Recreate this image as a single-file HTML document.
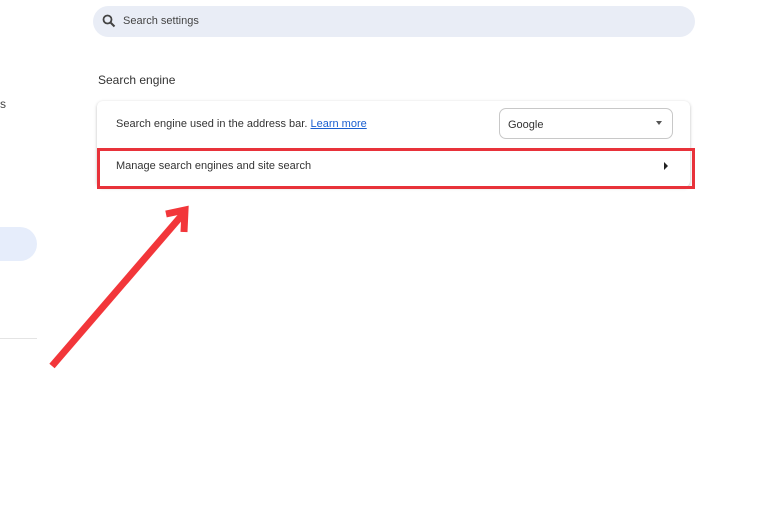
<!DOCTYPE html>
<html><head><style>
body{margin:0;width:768px;height:512px;background:#fff;font-family:"Liberation Sans",sans-serif;position:relative;overflow:hidden;color:#1f1f1f}
.a{position:absolute}
</style></head><body>
<div class="a" style="left:93px;top:6px;width:602px;height:31px;background:#e9edf6;border-radius:16px"></div>
<svg class="a" style="left:102px;top:14px" width="14" height="14" viewBox="0 0 14 14"><circle cx="5.5" cy="5.5" r="4" fill="none" stroke="#444" stroke-width="1.8"/><path d="M8.5 8.5L12.5 12.5" stroke="#444" stroke-width="2"/></svg>
<div class="a" style="left:123px;top:15px;font-size:11px;color:#444">Search settings</div>
<div class="a" style="left:0;top:97px;font-size:12px;color:#444">s</div>
<div class="a" style="left:-20px;top:227px;width:57px;height:34px;background:#e6edfb;border-radius:17px"></div>
<div class="a" style="left:0;top:338px;width:37px;height:1px;background:#e4e4e4"></div>
<div class="a" style="left:98px;top:73px;font-size:12px;color:#333">Search engine</div>
<div class="a" style="left:97px;top:101px;width:593px;height:86px;background:#fff;border-radius:6px;box-shadow:0 1px 3px rgba(0,0,0,.25)"></div>
<div class="a" style="left:116px;top:118px;font-size:11px;color:#333">Search engine used in the address bar. <span style="color:#1a5fd0;text-decoration:underline">Learn more</span></div>
<div class="a" style="left:499px;top:108px;width:172px;height:29px;border:1px solid #c8c8c8;border-radius:7px"></div>
<div class="a" style="left:508px;top:119px;font-size:11px;color:#333">Google</div>
<div class="a" style="left:656px;top:121px;width:0;height:0;border-left:3px solid transparent;border-right:3px solid transparent;border-top:4px solid #555"></div>
<div class="a" style="left:97px;top:148px;width:592px;height:35px;border:3px solid #e8323a"></div>
<div class="a" style="left:116px;top:160px;font-size:11px;color:#333">Manage search engines and site search</div>
<div class="a" style="left:664px;top:162px;width:0;height:0;border-top:4px solid transparent;border-bottom:4px solid transparent;border-left:4px solid #222"></div>
<svg class="a" style="left:0;top:0" width="768" height="512"><g stroke="#f2363a" stroke-width="7" fill="none" stroke-linecap="butt"><path d="M52 366L183 214"/><path d="M166 214L185 210L184 232" stroke-linejoin="miter"/></g></svg>
</body></html>
